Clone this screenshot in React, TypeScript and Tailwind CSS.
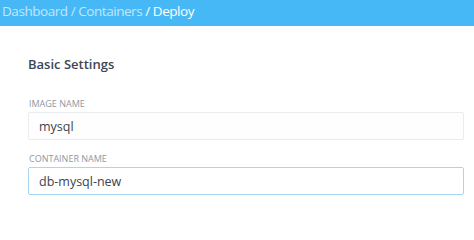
import React from 'react';

const App: React.FC = () => {
  return (
    <div className="w-[474px] h-[204px] bg-white overflow-hidden" style={{ fontFamily: '"Open Sans", sans-serif' }}>
      {/* Breadcrumb bar */}
      <div className="h-[26px] bg-[#47b8f6] flex items-center pl-[2px] pb-[2px] text-[13.5px] tracking-[-0.45px] leading-none whitespace-pre">
        <span className="text-[#c3e6fb]">Dashboard / Containers</span>
        <span className="text-white"> / Deploy</span>
      </div>

      {/* Form */}
      <div className="pl-[28px] pr-[10px] pt-[32px]">
        <h2 className="text-[13px] font-semibold text-[#3b4754] leading-none mb-[28px]">Basic Settings</h2>

        <div className="space-y-[14px]">
          <div>
            <label className="block text-[9px] uppercase text-[#8e99a3] leading-none mb-[4px] pl-[1px]">Image Name</label>
            <input
              readOnly
              value="mysql"
              className="w-full h-[28px] px-[10px] text-[12.5px] text-[#3a4450] bg-[#fefefe] border border-[#e8ecee] rounded-[2px] outline-none"
            />
          </div>
          <div>
            <label className="block text-[9px] uppercase text-[#8e99a3] leading-none mb-[4px] pl-[1px]">Container Name</label>
            <input
              readOnly
              value="db-mysql-new"
              className="w-full h-[28px] px-[10px] text-[12.5px] text-[#3a4450] bg-white border border-[#a6d6f2] rounded-[2px] outline-none"
            />
          </div>
        </div>
      </div>
    </div>
  );
};

export default App;
